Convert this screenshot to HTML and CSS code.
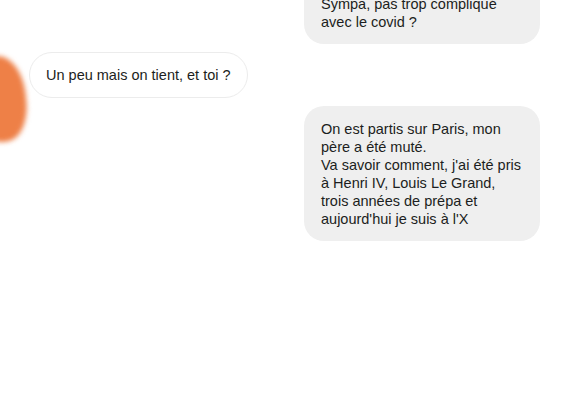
FILE: index.html
```html
<!doctype html>
<html>
  <head>
    <title>Messages</title>
    <link rel="stylesheet" href="styles.css">
  </head>
  <body>
    <div class="thread">
      <div class="row out">
        <div class="bubble">Sympa, pas trop compliqué avec le covid ?</div>
      </div>

      <div class="row in">
        <div class="avatar"></div>
        <div class="bubble">Un peu mais on tient, et toi ?</div>
      </div>

      <div class="row out">
        <div class="bubble">
          On est partis sur Paris, mon père a été muté.<br />
          Va savoir comment, j'ai été pris à Henri IV, Louis Le Grand, trois
          années de prépa et aujourd'hui je suis à l'X
        </div>
      </div>
    </div>
  </body>
</html>
```

FILE: styles.css
```css
body {
  margin: 0;
  background-color: white;
  font-family: "Liberation Sans", Arial, Helvetica, sans-serif;
  font-size: 14.5px;
  color: #1c1e21;
  overflow: hidden;
}
.thread {
  display: flex;
  flex-direction: column;
  gap: 8px;
  margin-top: -19px;
  padding: 0 26px 0 29px;
}
.row {
  position: relative;
  display: flex;
}
.row.out {
  justify-content: flex-end;
}
.row.in {
  justify-content: flex-start;
}
.bubble {
  line-height: 18px;
  padding: 14px 17px 13px;
  border-radius: 20px;
}
.out .bubble {
  width: 202px;
  background-color: #efefef;
}
.in .bubble {
  padding: 13px 16px;
  background-color: white;
  border: 1px solid #ececec;
  border-radius: 23px;
}
.avatar {
  position: absolute;
  left: -55px;
  top: 4px;
  width: 52px;
  height: 86px;
  background-color: #ee8047;
  border-radius: 48% 48% 45% 45%;
  filter: blur(2.5px);
  transform: rotate(-6deg);
}
```
